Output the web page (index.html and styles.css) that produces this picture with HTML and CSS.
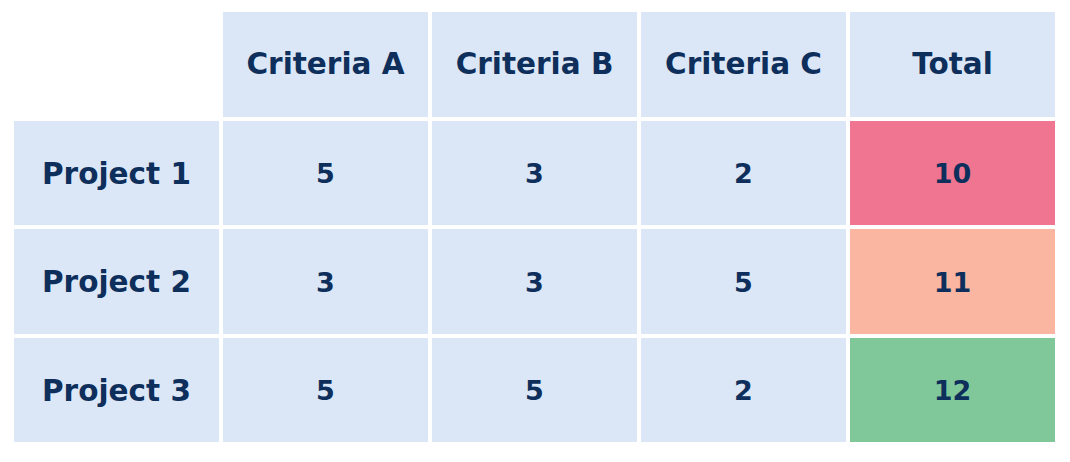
FILE: index.html
```html
<!DOCTYPE html>
<html>
<head>
<meta charset="utf-8">
<link rel="stylesheet" href="styles.css">
</head>
<body>
<div class="grid">
  <div class="blank"></div>
  <div class="cell head">Criteria A</div>
  <div class="cell head">Criteria B</div>
  <div class="cell head">Criteria C</div>
  <div class="cell head">Total</div>

  <div class="cell label">Project 1</div>
  <div class="cell num">5</div>
  <div class="cell num">3</div>
  <div class="cell num">2</div>
  <div class="cell num total pink">10</div>

  <div class="cell label">Project 2</div>
  <div class="cell num">3</div>
  <div class="cell num">3</div>
  <div class="cell num">5</div>
  <div class="cell num total salmon">11</div>

  <div class="cell label">Project 3</div>
  <div class="cell num">5</div>
  <div class="cell num">5</div>
  <div class="cell num">2</div>
  <div class="cell num total green">12</div>
</div>
</body>
</html>
```
FILE: styles.css
```css
html, body {
  margin: 0;
  background: #ffffff;
}
body {
  padding: 12px 0 0 14px;
  font-family: "DejaVu Sans", sans-serif;
  color: #0e2f5b;
}
.grid {
  display: grid;
  grid-template-columns: repeat(5, 205px);
  grid-template-rows: repeat(4, 104.5px);
  gap: 4px;
}
.cell {
  background: #dbe7f6;
  display: flex;
  align-items: center;
  justify-content: center;
  font-weight: bold;
  font-size: 28px;
}
.head {
  font-size: 29.5px;
}
.label {
  justify-content: flex-start;
  padding-left: 28px;
  font-size: 29.5px;
  padding-top: 2px;
}
.num {
  font-size: 27px;
  padding-top: 2px;
}
.pink { background: #f07590; }
.salmon { background: #fbb6a2; }
.green { background: #80c89a; }
```
